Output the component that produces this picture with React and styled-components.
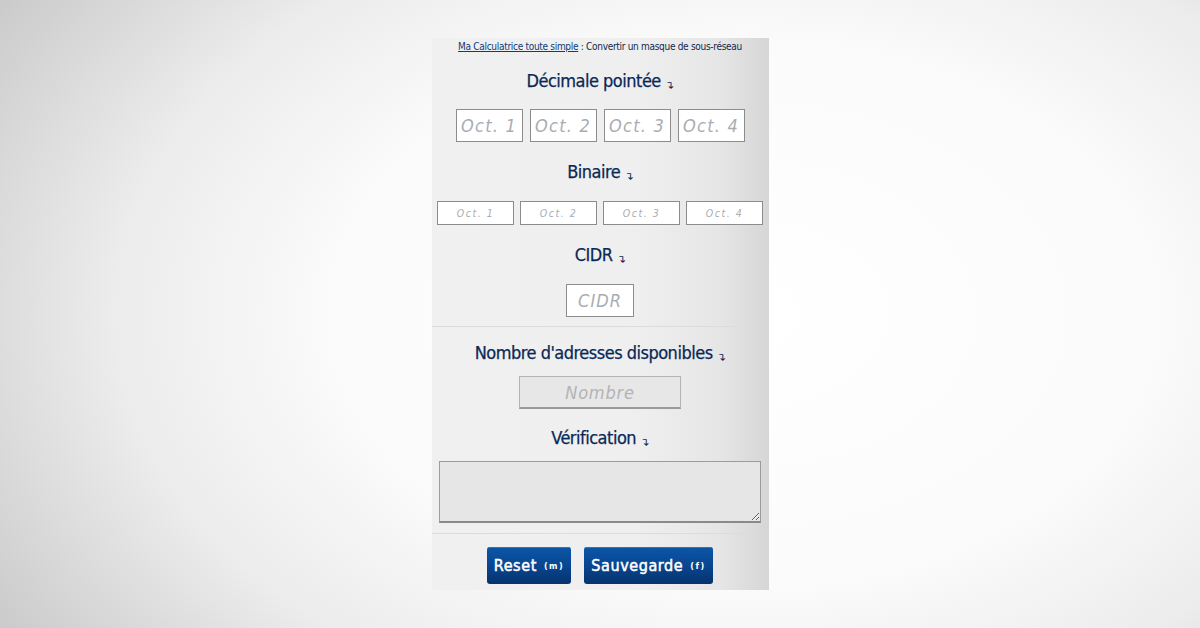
import React from "react";
import styled, { createGlobalStyle } from "styled-components";

const Global = createGlobalStyle`
  html, body { margin: 0; padding: 0; height: 100%; }
  body {
    background: radial-gradient(ellipse 75% 95% at 62% 50%, #ffffff 0%, #fbfbfb 45%, #ececec 70%, #c8c8c8 100%);
    font-family: "DejaVu Sans Condensed", "DejaVu Sans", sans-serif;
    font-stretch: condensed;
  }
  #root { height: 628px; }
`;

const Page = styled.div`
  height: 628px;
  display: flex;
  justify-content: center;
  padding-top: 38px;
  box-sizing: border-box;
`;

const Panel = styled.div`
  width: 337px;
  height: 552px;
  background: linear-gradient(to right, #f0f0f0 0%, #efefef 60%, #e6e6e6 85%, #d6d6d6 100%);
  display: flex;
  flex-direction: column;
  align-items: center;
  box-sizing: border-box;
  padding-top: 2px;
`;

const TopLine = styled.div`
  font-size: 10px;
  line-height: 14px;
  height: 14px;
  color: #12284a;
  letter-spacing: -0.3px;
  white-space: nowrap;
`;

const TopLink = styled.a`
  color: #103a78;
  text-decoration: underline;
`;

const Heading = styled.div`
  font-size: 18px;
  line-height: 24px;
  height: 24px;
  color: #0a2856;
  -webkit-text-stroke: 0.25px #0a2856;
  margin-top: ${(p) => p.$mt}px;
  white-space: nowrap;
  letter-spacing: -0.5px;
`;

const Arrow = styled.span`
  font-family: "DejaVu Sans", sans-serif;
  font-stretch: normal;
  font-size: 11px;
  line-height: 0;
  margin-left: 4px;
  position: relative;
  top: 2px;
  -webkit-text-stroke: 0;
  color: #0a2856;
`;

const Row = styled.div`
  display: flex;
  gap: ${(p) => p.$gap}px;
  margin-top: ${(p) => p.$mt}px;
`;

const Field = styled.input`
  box-sizing: border-box;
  width: ${(p) => p.$w}px;
  height: ${(p) => p.$h}px;
  border: 1px solid #8c8c8c;
  background: #fff;
  font-family: "DejaVu Sans Condensed", "DejaVu Sans", sans-serif;
  font-stretch: condensed;
  font-style: italic;
  font-size: ${(p) => p.$fs}px;
  letter-spacing: ${(p) => p.$ls}px;
  text-align: center;
  padding: 0;
  outline: none;
  &::placeholder { color: #a9adb3; }
`;

const Separator = styled.div`
  align-self: stretch;
  height: 1px;
  margin-top: ${(p) => p.$mt}px;
  margin-right: ${(p) => p.$mr}px;
  background: #dcdcdc;
`;

const ReadOnlyField = styled.input`
  box-sizing: border-box;
  width: 162px;
  height: 33px;
  margin-top: 11px;
  border: 1px solid #b4b4b4;
  border-bottom: 2px solid #9a9a9a;
  background: #e7e7e7;
  font-family: "DejaVu Sans Condensed", "DejaVu Sans", sans-serif;
  font-stretch: condensed;
  font-style: italic;
  font-size: 18px;
  letter-spacing: 0.8px;
  text-align: center;
  padding: 0;
  &::placeholder { color: #b3b3b3; }
`;

const Verify = styled.textarea`
  box-sizing: border-box;
  width: 322px;
  height: 62px;
  margin-top: 11px;
  border: 1px solid #9c9c9c;
  border-bottom: 2px solid #8a8a8a;
  background: #e6e6e6;
  resize: vertical;
  outline: none;
  display: block;
`;

const Buttons = styled.div`
  display: flex;
  gap: 13px;
  margin-top: 13px;
`;

const Button = styled.button`
  height: 37px;
  width: ${(p) => p.$w}px;
  border: none;
  border-radius: 3px;
  background: linear-gradient(to bottom, #0b56a8 0%, #094690 50%, #06326e 100%);
  box-shadow: inset 0 1px 0 #2f74c2;
  color: #fff;
  -webkit-text-stroke: 0.5px #fff;
  font-family: "DejaVu Sans Condensed", "DejaVu Sans", sans-serif;
  font-stretch: condensed;
  font-weight: normal;
  font-size: 16px;
  letter-spacing: 0.6px;
  padding: 0;
  display: flex;
  align-items: center;
  justify-content: center;
  cursor: pointer;
`;

const Key = styled.span`
  font-size: 9px;
  letter-spacing: 1.5px;
  margin-left: 7px;
  font-weight: bold;
  -webkit-text-stroke: 0;
`;

const H = ({ children, mt }) => (
  <Heading $mt={mt}>
    {children}
    <Arrow>↴</Arrow>
  </Heading>
);

export default function App() {
  return (
    <>
      <Global />
      <Page>
        <Panel>
          <TopLine>
            <TopLink href="#">Ma Calculatrice toute simple</TopLink> : Convertir un masque de sous-réseau
          </TopLine>
          <H mt={15}>Décimale pointée</H>
          <Row $gap={7} $mt={16}>
            {[1, 2, 3, 4].map((n) => (
              <Field key={n} $w={67} $h={33} $fs={18} $ls={1.2} placeholder={`Oct. ${n}`} />
            ))}
          </Row>
          <H mt={18}>Binaire</H>
          <Row $gap={6} $mt={17}>
            {[1, 2, 3, 4].map((n) => (
              <Field key={n} $w={77} $h={24} $fs={10.5} $ls={1.5} placeholder={`Oct. ${n}`} />
            ))}
          </Row>
          <H mt={18}>CIDR</H>
          <Row $gap={0} $mt={17}>
            <Field $w={68} $h={33} $fs={18} $ls={1} placeholder="CIDR" />
          </Row>
          <Separator $mt={9} $mr={32} />
          <H mt={14}>Nombre d'adresses disponibles</H>
          <ReadOnlyField readOnly placeholder="Nombre" />
          <H mt={17}>Vérification</H>
          <Verify />
          <Separator $mt={10} $mr={12} />
          <Buttons>
            <Button $w={84}>Reset<Key>(m)</Key></Button>
            <Button $w={129}>Sauvegarde<Key>(f)</Key></Button>
          </Buttons>
        </Panel>
      </Page>
    </>
  );
}
